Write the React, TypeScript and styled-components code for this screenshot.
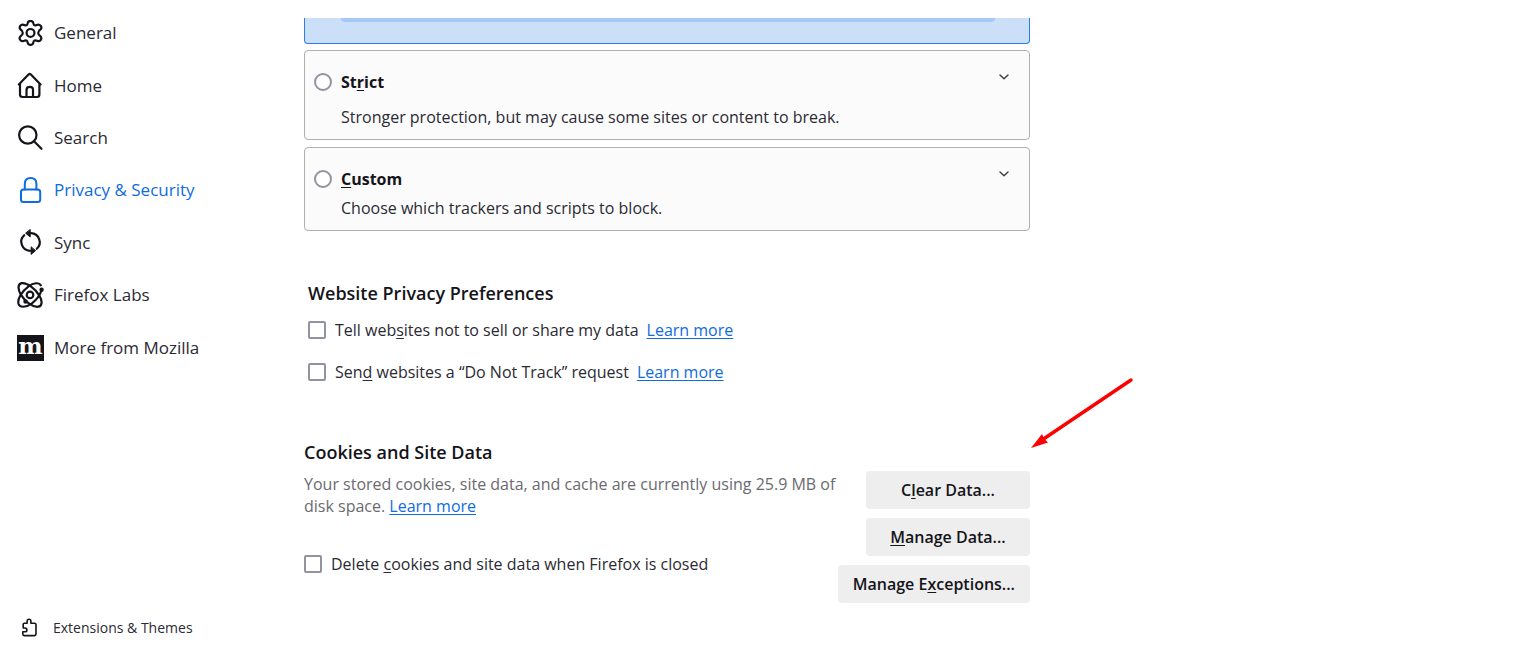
import React from "react";
import styled, { createGlobalStyle } from "styled-components";

const GlobalStyle = createGlobalStyle`
  *, *::before, *::after { box-sizing: border-box; }
  body {
    margin: 0;
    background: #ffffff;
    color: #2b2a33;
    font-family: "Segoe UI", "Open Sans", "Noto Sans", sans-serif;
    font-size: 16px;
    line-height: 22px;
  }
  h2, p, ul { margin: 0; padding: 0; }
  ul { list-style: none; }
`;

const Page = styled.div`
  display: flex;
  min-height: 100vh;
`;

const Sidebar = styled.aside`
  display: flex;
  flex-direction: column;
  justify-content: space-between;
  flex: 0 0 304px;
  padding: 7px 0 6px 17px;
`;

const NavList = styled.ul`
  display: grid;
  grid-auto-rows: 1fr;
  min-height: 367px;
`;

const IconSlot = styled.span<{ $active?: boolean }>`
  display: flex;
  align-items: center;
  justify-content: center;
  width: 27px;
  height: 27px;
  flex: none;
  color: ${(p) => (p.$active ? "#0f6ce0" : "#15141a")};
  svg { display: block; }
`;

const NavLink = styled.a<{ $active?: boolean; $small?: boolean }>`
  display: flex;
  align-items: center;
  gap: ${(p) => (p.$small ? "9px" : "10px")};
  height: ${(p) => (p.$small ? "26px" : "100%")};
  color: ${(p) => (p.$active ? "#0f6ce0" : "#2b2a33")};
  font-size: ${(p) => (p.$small ? "14px" : "17px")};
  text-decoration: none;
`;

const MozillaMark = styled.span`
  display: flex;
  align-items: center;
  justify-content: center;
  width: 27px;
  height: 26px;
  padding-bottom: 4px;
  background: #15141a;
  color: #ffffff;
  font: bold 23px/22px "DejaVu Serif", serif;
`;

const Main = styled.main`
  flex: 1 1 auto;
  max-width: 726px;
  padding-top: 18px;
`;

const CardStack = styled.div`
  display: flex;
  flex-direction: column;
  gap: 7px;
`;

const SelectedCard = styled.div`
  height: 26px;
  padding: 0 34px 0 36px;
  margin-bottom: -1px;
  border: 1px solid #2a7de9;
  border-top: 0;
  border-radius: 0 0 4px 4px;
  background: #cbdff9;
`;

const InfoStrip = styled.div`
  height: 4px;
  border-radius: 0 0 4px 4px;
  background: #a5c8f8;
`;

const Card = styled.div`
  display: flex;
  align-items: flex-start;
  padding: 20px 17px 11px 9px;
  border: 1px solid #b0b0b3;
  border-radius: 4px;
  background: #fbfbfb;
`;

const Radio = styled.input`
  appearance: none;
  flex: none;
  width: 18px;
  height: 18px;
  margin: 2px 9px 0 0;
  border: 2px solid #9392a0;
  border-radius: 50%;
  background: #ffffff;
`;

const CardText = styled.div<{ $gap: number }>`
  display: flex;
  flex-direction: column;
  gap: ${(p) => p.$gap}px;
  flex: 1;
`;

const CardTitle = styled.label`
  color: #15141a;
  font-weight: 700;
`;

const Expander = styled.button`
  display: flex;
  width: 16px;
  height: 16px;
  margin-top: -2px;
  padding: 0;
  border: 0;
  background: none;
`;

const Key = styled.span`
  text-decoration: underline;
  text-decoration-thickness: 1px;
  text-underline-offset: 2px;
`;

const Heading = styled.h2`
  color: #15141a;
  font-size: 18px;
  font-weight: 600;
  line-height: 24px;
`;

const Preferences = styled.section`
  padding: 50px 4px 0;
`;

const CheckRow = styled.div`
  display: flex;
  align-items: center;
`;

const CheckList = styled.div`
  display: flex;
  flex-direction: column;
  gap: 20px;
  padding-top: 14px;
`;

const Checkbox = styled.input`
  appearance: none;
  flex: none;
  width: 18px;
  height: 18px;
  margin: 0 9px 0 0;
  border: 2px solid #9392a0;
  border-radius: 2px;
  background: #ffffff;
`;

const Link = styled.a`
  color: #0f6ce0;
  text-decoration: underline;
  text-decoration-thickness: 1px;
  text-underline-offset: 2px;
`;

const RowLink = styled(Link)`
  margin-left: 8px;
`;

const Cookies = styled.section`
  position: relative;
  padding-top: 57px;
`;

const CookiesBody = styled.div`
  display: flex;
  justify-content: space-between;
  align-items: flex-start;
  padding-top: 7px;
`;

const CookiesText = styled.div`
  flex: 1;
  display: flex;
  flex-direction: column;
  gap: 36px;
  padding-top: 2px;
`;

const Muted = styled.p`
  color: #6b6a70;
`;

const Buttons = styled.div`
  display: flex;
  flex-direction: column;
  align-items: flex-end;
  flex: none;
  gap: 9px;
`;

const Button = styled.button`
  min-width: 164px;
  height: 38px;
  padding: 0 15px;
  border: 0;
  border-radius: 4px;
  background: #eeeeee;
  color: #15141a;
  font: inherit;
  font-weight: 600;
`;

const Arrow = styled.svg`
  position: absolute;
  left: 100%;
  top: 0;
  overflow: visible;
`;

const stroke = {
  fill: "none",
  stroke: "currentColor",
  strokeWidth: 2,
  strokeLinecap: "round" as const,
  strokeLinejoin: "round" as const,
};

const GearIcon = () => (
  <svg width="27" height="27" viewBox="0 0 27 27" {...stroke} strokeWidth="2.2">
    <circle cx="13.5" cy="12.9" r="3.9" />
    <path d="M10.6 3.4Q11 .9 13.5 .9T16.4 3.4Q16.8 5.9 19 5.2Q22 3.7 23.6 5.7T23.7 9.3Q21.2 10.9 21.2 12.9T23.7 16.5Q25 18.2 23.6 20.1T19 20.6Q16.8 19.9 16.4 22.4Q16 24.9 13.5 24.9T10.6 22.4Q10.2 19.9 8 20.6Q5 22.1 3.4 20.1T3.3 16.5Q5.8 14.9 5.8 12.9T3.3 9.3Q2 7.7 3.4 5.7T8 5.2Q10.2 5.9 10.6 3.4Z" />
  </svg>
);

const HomeIcon = () => (
  <svg width="27" height="27" viewBox="0 0 27 27" {...stroke} strokeWidth="2.2">
    <path d="M1.8 12.4 11.5 2.5Q12.7 1.5 13.9 2.5L23.6 12.4M3 11.5V22.5Q3 25 5.5 25H20Q22.4 25 22.4 22.5V11.5M9.5 25V18Q9.5 14.8 12.8 14.8T16 18V25" />
  </svg>
);

const SearchIcon = () => (
  <svg width="27" height="27" viewBox="0 0 27 27" {...stroke} strokeWidth="2.2">
    <circle cx="10.8" cy="10" r="8.7" />
    <path d="M17.2 16.5 24.5 23.8" />
  </svg>
);

const LockIcon = () => (
  <svg width="27" height="27" viewBox="0 0 27 27" {...stroke}>
    <rect x="4" y="12.6" width="19.2" height="12.3" rx="2.5" />
    <path d="M7.8 12.6V7Q7.8 1 13.6 1T19.4 7V12.6" />
  </svg>
);

const SyncIcon = () => (
  <svg width="27" height="27" viewBox="0 0 27 27" {...stroke} strokeWidth="2.2">
    <path d="M7.2 6.2A9 9 0 0 0 13 21.8M19.8 19.8A9 9 0 0 0 14 4.2" />
    <path d="M13.2 .8V8L8.9 4.4ZM14.1 18.2V25.4L18.4 21.8Z" fill="currentColor" strokeWidth="1" />
  </svg>
);

const LabsIcon = () => (
  <svg width="27" height="27" viewBox="0 -0.5 27 27" {...stroke} strokeWidth="2.2">
    <path d="M4.7 .7C10-.2 18 6.2 22.2 12.8C25.8 18.8 25.2 23.8 21.2 24.2C15.8 25 8.2 19.2 4 12.4C.4 6.4.8 1.4 4.7 .7Z" />
    <path d="M23.7 2.8C22.2-.2 16.5 0 11.6 3.8C4.5 9 .3 16.6 1.5 21.2C2.8 25.6 9.2 25 14.9 20.8C20 16.8 23.3 11.8 24.4 8" />
    <circle cx="13" cy="12.4" r="3.3" />
    <circle cx="24.6" cy="7.2" r="1.1" fill="currentColor" />
    <circle cx="8.5" cy="19" r="1.1" fill="currentColor" />
  </svg>
);

const PuzzleIcon = () => (
  <svg width="20" height="20" viewBox="0 0 20 20" {...stroke} strokeWidth="1.6">
    <path d="M2.2 6.3Q2.2 5.2 3.3 5.2H6.1V3.3Q6.1 1.2 8 1.2T9.9 3.3V5.2H13.5Q15 5.2 15 6.7V16.1Q15 17.6 13.5 17.6H3.3Q1.8 17.6 1.8 16.1V13.8H4Q5.9 13.7 5.9 11.9T4 10H2.2Z" />
  </svg>
);

const ChevronIcon = () => (
  <svg width="16" height="16" viewBox="0 0 16 16" {...stroke} stroke="#3f3e47" strokeWidth="1.5">
    <path d="M4 6 8 9.7 12 6" />
  </svg>
);

const navItems = [
  { label: "General", icon: <GearIcon /> },
  { label: "Home", icon: <HomeIcon /> },
  { label: "Search", icon: <SearchIcon /> },
  { label: "Privacy & Security", icon: <LockIcon />, active: true },
  { label: "Sync", icon: <SyncIcon /> },
  { label: "Firefox Labs", icon: <LabsIcon /> },
  { label: "More from Mozilla", icon: <MozillaMark aria-hidden="true">m</MozillaMark> },
];

export default function App() {
  return (
    <Page>
      <GlobalStyle />
      <Sidebar>
        <nav>
          <NavList>
            {navItems.map((item) => (
              <li key={item.label}>
                <NavLink href="#" $active={item.active}>
                  <IconSlot $active={item.active}>{item.icon}</IconSlot>
                  {item.label}
                </NavLink>
              </li>
            ))}
          </NavList>
        </nav>
        <NavLink href="#" $small>
          <IconSlot><PuzzleIcon /></IconSlot>
          Extensions &amp; Themes
        </NavLink>
      </Sidebar>

      <Main>
        <CardStack>
          <SelectedCard>
            <InfoStrip />
          </SelectedCard>
          <Card>
            <Radio type="radio" name="protection" id="strict" />
            <CardText $gap={13}>
              <CardTitle htmlFor="strict">St<Key>r</Key>ict</CardTitle>
              <p>Stronger protection, but may cause some sites or content to break.</p>
            </CardText>
            <Expander aria-label="Expand Strict"><ChevronIcon /></Expander>
          </Card>
          <Card>
            <Radio type="radio" name="protection" id="custom" />
            <CardText $gap={7}>
              <CardTitle htmlFor="custom"><Key>C</Key>ustom</CardTitle>
              <p>Choose which trackers and scripts to block.</p>
            </CardText>
            <Expander aria-label="Expand Custom"><ChevronIcon /></Expander>
          </Card>
        </CardStack>

        <Preferences>
          <Heading>Website Privacy Preferences</Heading>
          <CheckList>
            <CheckRow>
              <Checkbox type="checkbox" id="sell" />
              <label htmlFor="sell">Tell web<Key>s</Key>ites not to sell or share my data</label>
              <RowLink href="#">Learn more</RowLink>
            </CheckRow>
            <CheckRow>
              <Checkbox type="checkbox" id="dnt" />
              <label htmlFor="dnt">Sen<Key>d</Key> websites a “Do Not Track” request</label>
              <RowLink href="#">Learn more</RowLink>
            </CheckRow>
          </CheckList>
        </Preferences>

        <Cookies>
          <Heading>Cookies and Site Data</Heading>
          <CookiesBody>
            <CookiesText>
              <Muted>
                Your stored cookies, site data, and cache are currently using 25.9 MB of disk space.{" "}
                <Link href="#">Learn more</Link>
              </Muted>
              <CheckRow>
                <Checkbox type="checkbox" id="delete" />
                <label htmlFor="delete">Delete <Key>c</Key>ookies and site data when Firefox is closed</label>
              </CheckRow>
            </CookiesText>
            <Buttons>
              <Button>C<Key>l</Key>ear Data...</Button>
              <Button><Key>M</Key>anage Data...</Button>
              <Button>Manage E<Key>x</Key>ceptions...</Button>
            </Buttons>
          </CookiesBody>
          <Arrow width="104" height="70" viewBox="0 0 104 70" aria-hidden="true">
            <path d="M101 -3 12 57" fill="none" stroke="#fe0000" strokeWidth="3.4" strokeLinecap="round" />
            <path d="M1 65 12 51 14 55.5 18 59.5Z" fill="#fe0000" />
          </Arrow>
        </Cookies>
      </Main>
    </Page>
  );
}
